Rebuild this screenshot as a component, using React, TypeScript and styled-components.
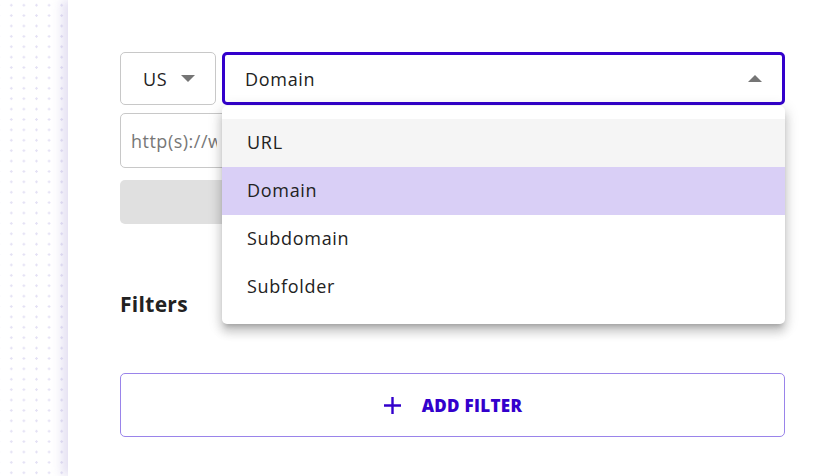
import React from "react";
import styled, { createGlobalStyle } from "styled-components";

const GlobalStyle = createGlobalStyle`
  html, body {
    margin: 0;
    padding: 0;
    background: #ffffff;
    font-family: "Open Sans", "DejaVu Sans", sans-serif;
    color: #222222;
  }
  * {
    box-sizing: border-box;
  }
`;

const accent = "#3300cc";

const Page = styled.div`
  display: flex;
  height: 100vh;
  overflow: hidden;
`;

const Sidebar = styled.div`
  width: 68px;
  flex-shrink: 0;
  background-color: #ffffff;
  background-image: radial-gradient(circle, #e4e1f4 1px, transparent 1.4px);
  background-size: 12.6px 10.4px;
  background-position: 5px 0px;
`;

const Main = styled.main`
  position: relative;
  z-index: 1;
  flex: 1;
  background: #ffffff;
  box-shadow: -6px 0 10px rgba(170, 160, 215, 0.32);
  padding: 52px 43px 0 52px;
`;

const Form = styled.div`
  display: flex;
  flex-direction: column;
  width: 665px;
`;

const TopRow = styled.div`
  display: flex;
  gap: 6px;
`;

const SelectBox = styled.div<{ $focused?: boolean; $width?: number }>`
  position: relative;
  display: flex;
  align-items: center;
  justify-content: space-between;
  height: 53px;
  ${(p) => (p.$width ? `width: ${p.$width}px;` : "flex: 1;")}
  padding: 0 20px 0 ${(p) => (p.$focused ? 20 : 22)}px;
  border: ${(p) => (p.$focused ? `3px solid ${accent}` : "1px solid #c8c8c8")};
  border-radius: 5px;
  font-size: 18px;
  letter-spacing: 0.7px;
  color: #222222;
  background: #ffffff;
`;

const Caret = styled.span<{ $up?: boolean }>`
  width: 0;
  height: 0;
  border-left: 7px solid transparent;
  border-right: 7px solid transparent;
  ${(p) =>
    p.$up ? "border-bottom: 7px solid #757575;" : "border-top: 7px solid #757575;"}
`;

const UrlInput = styled.div`
  display: flex;
  align-items: center;
  height: 55px;
  margin-top: 8px;
  padding: 0 10px;
  border: 1px solid #c8c8c8;
  border-radius: 5px;
  font-size: 18px;
  letter-spacing: 0.5px;
  color: #777777;
`;

/* the rest of the placeholder sits under the open menu */
const Placeholder = styled.span`
  max-width: 86px;
  overflow: hidden;
  white-space: nowrap;
`;

const SubmitButton = styled.div`
  height: 44px;
  margin-top: 12px;
  border-radius: 5px;
  background: #e0e0e0;
`;

const Heading = styled.h2`
  margin: 64px 0 0;
  font-size: 21px;
  line-height: 33px;
  font-weight: 700;
  letter-spacing: 0.3px;
  color: #222222;
`;

const AddFilterButton = styled.button`
  display: flex;
  align-items: center;
  justify-content: center;
  gap: 20px;
  height: 64px;
  margin-top: 52px;
  border: 1px solid #9a84ea;
  border-radius: 5px;
  background: #ffffff;
  color: ${accent};
  font-family: inherit;
  font-size: 17px;
  font-weight: 800;
  letter-spacing: 0.3px;
  cursor: pointer;
`;

const Menu = styled.ul`
  position: absolute;
  top: 51px;
  left: -3px;
  right: -3px;
  margin: 0;
  padding: 13px 0;
  list-style: none;
  background: #ffffff;
  border-radius: 5px;
  box-shadow: 0px 5px 5px -3px rgba(0, 0, 0, 0.2),
    0px 8px 10px 1px rgba(0, 0, 0, 0.14), 0px 3px 14px 2px rgba(0, 0, 0, 0.12);
  z-index: 5;
`;

const MenuItem = styled.li<{ $state?: "hover" | "selected" }>`
  display: flex;
  align-items: center;
  height: 48px;
  padding: 0 0 3px 25px;
  font-size: 18px;
  letter-spacing: 0.7px;
  color: #222222;
  background: ${(p) =>
    p.$state === "selected" ? "#d9cff6" : p.$state === "hover" ? "#f5f5f5" : "transparent"};
`;

const options = ["URL", "Domain", "Subdomain", "Subfolder"];

const PlusIcon = () => (
  <svg width="19" height="19" viewBox="0 0 19 19" aria-hidden="true">
    <path d="M9.5 1v17M1 9.5h17" stroke={accent} strokeWidth="2.4" fill="none" />
  </svg>
);

const App = () => {
  return (
    <Page>
      <GlobalStyle />
      <Sidebar />
      <Main>
        <Form>
          <TopRow>
            <SelectBox $width={96}>
              US
              <Caret />
            </SelectBox>
            <SelectBox $focused>
              Domain
              <Caret $up />
              <Menu>
                {options.map((o, i) => (
                  <MenuItem key={o} $state={i === 0 ? "hover" : i === 1 ? "selected" : undefined}>
                    {o}
                  </MenuItem>
                ))}
              </Menu>
            </SelectBox>
          </TopRow>
          <UrlInput>
            <Placeholder>http(s)://www.example.com</Placeholder>
          </UrlInput>
          <SubmitButton />
          <Heading>Filters</Heading>
          <AddFilterButton>
            <PlusIcon />
            ADD FILTER
          </AddFilterButton>
        </Form>
      </Main>
    </Page>
  );
};

export default App;
